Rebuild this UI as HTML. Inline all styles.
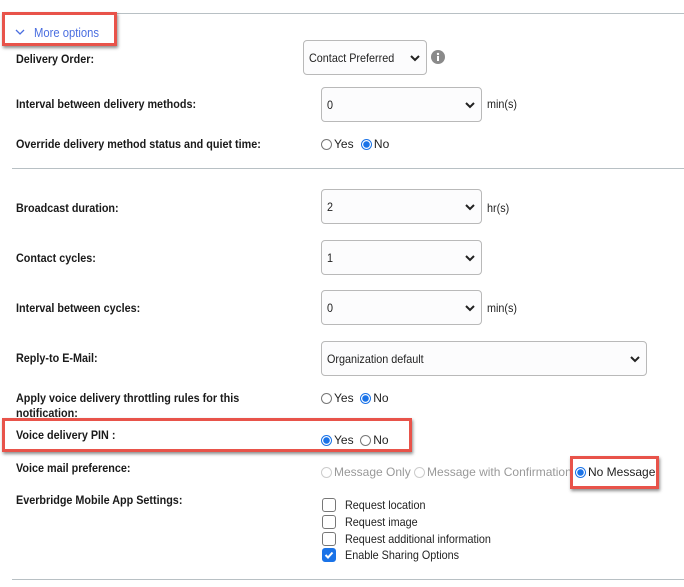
<!DOCTYPE html>
<html><head><meta charset="utf-8"><style>
*{box-sizing:border-box;margin:0;padding:0}
body{width:684px;height:587px;background:#fff;position:relative;overflow:hidden;font-family:"Liberation Sans",Arial,sans-serif;font-size:12px;color:#222}
.a{position:absolute;white-space:nowrap;transform:scaleX(.9);transform-origin:0 0}
.a.u{transform:none}
.l{font-weight:bold;color:#1a1a1a}
.line{position:absolute;left:12px;right:0;height:1px;background:#b8c0c4}
.sel{position:absolute;border:1px solid #b9b9b9;border-radius:4px;background:#fcfcfd;height:35px;padding-left:5px;line-height:35px;font-size:12px;color:#222}
.sel span{display:inline-block;transform:scaleX(.9);transform-origin:0 0}
.sel svg{position:absolute;right:6px;top:13px}
.red{position:absolute;border:3px solid #e8534a;box-shadow:1px 2px 3px rgba(0,0,0,.45)}
.r{display:inline-block;width:11px;height:11px;border:1px solid #777;border-radius:50%;vertical-align:-2px;margin-right:2px;background:#fff}
.r.on{border:1px solid #1a73e8;background:radial-gradient(circle,#1a73e8 0 3px,#fff 3.5px)}
.r.dis{border-color:#ccc}
.cb{position:absolute;left:322px;width:14px;height:14px;border:1px solid #777;border-radius:3px;background:#fff}
.cb.on{background:#1a73e8;border-color:#1a73e8}
</style></head><body>
<div class="line" style="top:13px"></div>
<div class="red" style="left:2px;top:12px;width:115px;height:34px"></div>
<svg style="position:absolute;left:15px;top:28px" width="10" height="8" viewBox="0 0 10 8"><path d="M1 2l4 4 4-4" fill="none" stroke="#4a6ee0" stroke-width="1.3"/></svg>
<div class="a" style="left:34px;top:26px;color:#4a6ee0;font-size:12.5px">More options</div>

<div class="a l" style="left:16px;top:52px">Delivery Order:</div>
<div class="sel" style="left:303px;top:40px;width:124px"><span>Contact Preferred</span><svg width="10" height="8" viewBox="0 0 10 8"><path d="M1 2l4 4 4-4" fill="none" stroke="#222" stroke-width="2"/></svg></div>
<svg style="position:absolute;left:431px;top:50px" width="14" height="14" viewBox="0 0 14 14"><circle cx="7" cy="7" r="7" fill="#8a8a8a"/><rect x="6" y="6" width="2" height="5" fill="#fff"/><circle cx="7" cy="4" r="1.2" fill="#fff"/></svg>

<div class="a l" style="left:16px;top:97px">Interval between delivery methods:</div>
<div class="sel" style="left:321px;top:87px;width:161px"><span>0</span><svg width="10" height="8" viewBox="0 0 10 8"><path d="M1 2l4 4 4-4" fill="none" stroke="#222" stroke-width="2"/></svg></div>
<div class="a" style="left:487px;top:97px">min(s)</div>

<div class="a l" style="left:16px;top:137px">Override delivery method status and quiet time:</div>
<div class="a u" style="left:321px;top:137px"><span class="r"></span>Yes <span class="r on" style="margin-left:4px"></span>No</div>

<div class="line" style="top:168px"></div>

<div class="a l" style="left:16px;top:201px">Broadcast duration:</div>
<div class="sel" style="left:321px;top:189px;width:161px"><span>2</span><svg width="10" height="8" viewBox="0 0 10 8"><path d="M1 2l4 4 4-4" fill="none" stroke="#222" stroke-width="2"/></svg></div>
<div class="a" style="left:487px;top:201px">hr(s)</div>

<div class="a l" style="left:16px;top:251px">Contact cycles:</div>
<div class="sel" style="left:321px;top:240px;width:161px"><span>1</span><svg width="10" height="8" viewBox="0 0 10 8"><path d="M1 2l4 4 4-4" fill="none" stroke="#222" stroke-width="2"/></svg></div>

<div class="a l" style="left:16px;top:301px">Interval between cycles:</div>
<div class="sel" style="left:321px;top:290px;width:161px"><span>0</span><svg width="10" height="8" viewBox="0 0 10 8"><path d="M1 2l4 4 4-4" fill="none" stroke="#222" stroke-width="2"/></svg></div>
<div class="a" style="left:487px;top:301px">min(s)</div>

<div class="a l" style="left:16px;top:351px">Reply-to E-Mail:</div>
<div class="sel" style="left:321px;top:341px;width:326px"><span>Organization default</span><svg width="10" height="8" viewBox="0 0 10 8"><path d="M1 2l4 4 4-4" fill="none" stroke="#222" stroke-width="2"/></svg></div>

<div class="a l" style="left:16px;top:391px;line-height:15px">Apply voice delivery throttling rules for this<br>notification:</div>
<div class="a u" style="left:321px;top:391px"><span class="r"></span>Yes &nbsp;<span class="r on"></span>No</div>

<div class="red" style="left:2px;top:418px;width:410px;height:34px"></div>
<div class="a l" style="left:16px;top:428px">Voice delivery PIN :</div>
<div class="a u" style="left:321px;top:433px"><span class="r on"></span>Yes &nbsp;<span class="r"></span>No</div>

<div class="a l" style="left:16px;top:461px">Voice mail preference:</div>
<div class="a u" style="left:321px;top:465px;color:#999"><span class="r dis"></span>Message Only <span class="r dis"></span>Message with Confirmation</div>
<div class="red" style="left:570px;top:456px;width:89px;height:33px"></div>
<div class="a u" style="left:575px;top:465px;color:#222"><span class="r on"></span>No Message</div>

<div class="a l" style="left:16px;top:493px">Everbridge Mobile App Settings:</div>
<div class="cb" style="top:498px"></div><div class="a" style="left:345px;top:498px">Request location</div>
<div class="cb" style="top:515px"></div><div class="a" style="left:345px;top:515px">Request image</div>
<div class="cb" style="top:532px"></div><div class="a" style="left:345px;top:532px">Request additional information</div>
<div class="cb on" style="top:548px"><svg width="12" height="12" viewBox="0 0 12 12" style="position:absolute;left:0;top:0"><path d="M2.5 6l2.5 2.5 4.5-5" fill="none" stroke="#fff" stroke-width="2"/></svg></div><div class="a" style="left:345px;top:548px">Enable Sharing Options</div>

<div class="line" style="top:579px"></div>
</body></html>
